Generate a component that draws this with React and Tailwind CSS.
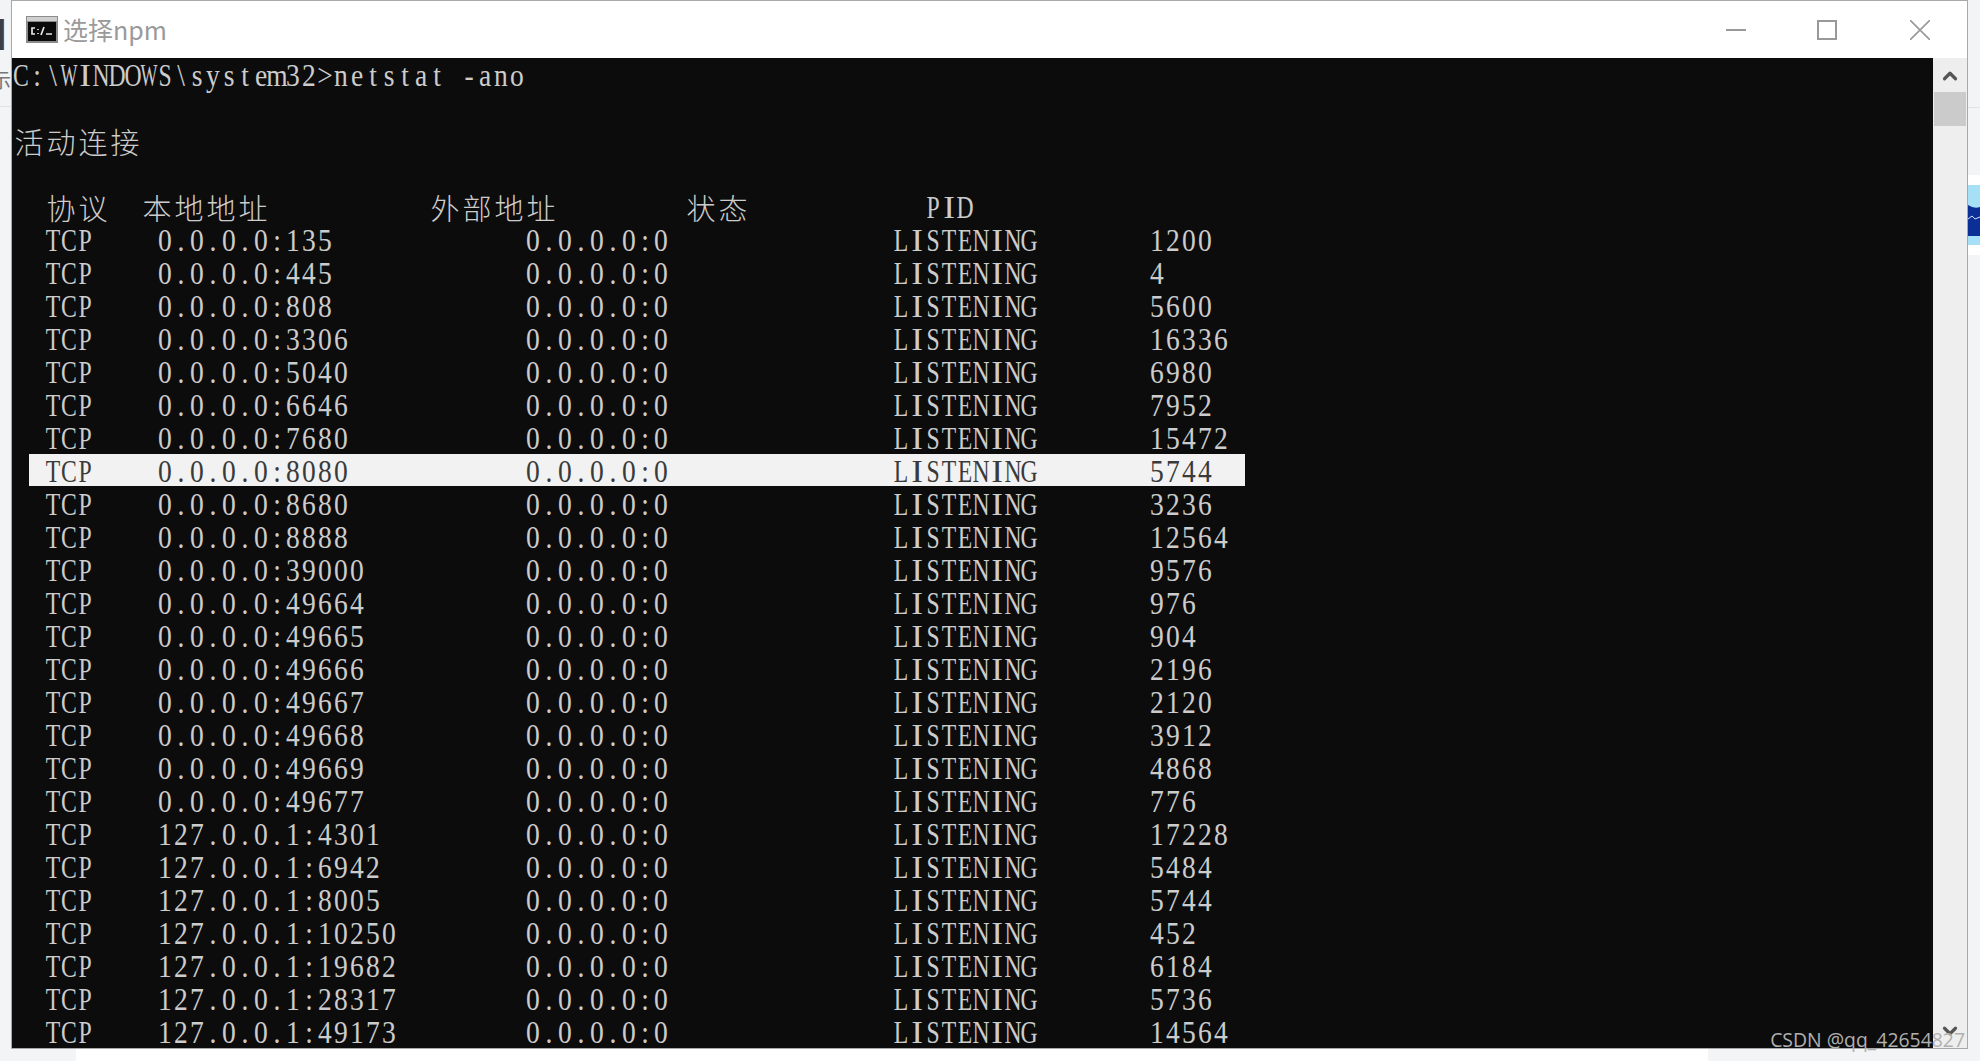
import React from 'react'
import { ChevronUp, ChevronDown } from 'lucide-react'

const listening = [
  ['0.0.0.0:135', '1200'],
  ['0.0.0.0:445', '4'],
  ['0.0.0.0:808', '5600'],
  ['0.0.0.0:3306', '16336'],
  ['0.0.0.0:5040', '6980'],
  ['0.0.0.0:6646', '7952'],
  ['0.0.0.0:7680', '15472'],
  ['0.0.0.0:8080', '5744'],
  ['0.0.0.0:8680', '3236'],
  ['0.0.0.0:8888', '12564'],
  ['0.0.0.0:39000', '9576'],
  ['0.0.0.0:49664', '976'],
  ['0.0.0.0:49665', '904'],
  ['0.0.0.0:49666', '2196'],
  ['0.0.0.0:49667', '2120'],
  ['0.0.0.0:49668', '3912'],
  ['0.0.0.0:49669', '4868'],
  ['0.0.0.0:49677', '776'],
  ['127.0.0.1:4301', '17228'],
  ['127.0.0.1:6942', '5484'],
  ['127.0.0.1:8005', '5744'],
  ['127.0.0.1:10250', '452'],
  ['127.0.0.1:19682', '6184'],
  ['127.0.0.1:28317', '5736'],
  ['127.0.0.1:49173', '14564'],
]

// same column widths netstat prints
const rowText = (addr, pid) =>
  '  TCP    ' + addr.padEnd(23) + '0.0.0.0:0'.padEnd(23) + 'LISTENING'.padEnd(16) + pid

const squeeze = (c) => {
  if (c === 'W' || c === 'M') return 'scale-x-[0.56]'
  if (c === 'I') return 'scale-x-[1.1]'
  if (c >= 'A' && c <= 'Z') return 'scale-x-[0.74]'
  return 'scale-x-[0.86]'
}

// console grid: latin chars take one 16px cell, chinese chars take two
const Char = ({ c }) => {
  if (c.charCodeAt(0) > 255) {
    return (
      <span className="flex w-8 shrink-0 justify-center font-['Noto_Sans_CJK_SC',sans-serif] text-[29px] font-light">{c}</span>
    )
  }
  return <span className={`flex w-4 shrink-0 justify-center ${squeeze(c)}`}>{c}</span>
}

const Line = ({ text = '' }) => (
  <div className="flex h-[33px] whitespace-pre leading-[34px]">
    {text.split('').map((c, i) => <Char key={i} c={c} />)}
  </div>
)

const SelectedLine = ({ text }) => (
  <div className="ml-4 mb-px flex h-[32px] w-[1216px] whitespace-pre bg-[#f2f2f2] leading-[34px] text-[#3a3a3a]">
    {text.split('').map((c, i) => <Char key={i} c={c} />)}
  </div>
)

export default function App() {
  return (
    <div className="relative h-[1061px] w-[1980px] overflow-hidden bg-white">
      <div className="flex h-[1049px]">
        {/* page behind the console window */}
        <div className="w-[11px] shrink-0 overflow-hidden bg-[#f3f4f6]">
          <div className="h-[107px] overflow-hidden border-b border-[#e2e2e2]">
            <div className="ml-[-25px] mt-[10px] h-[50px] font-['Liberation_Sans',sans-serif] text-[44px] font-bold leading-[50px] text-[#3c3f45]">H</div>
            <div className="ml-[-9px] mt-[8px] font-['Noto_Sans_CJK_SC',sans-serif] text-[20px] leading-6 text-[#777]">示</div>
          </div>
        </div>

        <div className="flex w-[1957px] shrink-0 flex-col border-x border-y border-[#a9a9a9] bg-white shadow-[3px_2px_4px_rgba(0,0,0,0.35)]">
          <div className="flex h-[57px] shrink-0 items-center">
            <svg width="32" height="27" viewBox="0 0 32 27" className="ml-[14px]">
              <rect width="32" height="27" fill="#8c8c8c" />
              <rect x="1" y="1" width="30" height="4" fill="#cfcfcf" />
              <rect x="2" y="6" width="28" height="19" fill="#0a0a0a" />
              <path d="M9 12H6v6h3M12 13v1M12 17v1M15 19l3-8M20 18h6" stroke="#e6e6e6" strokeWidth="1.7" fill="none" />
            </svg>
            <span className="ml-[5px] font-['Noto_Sans_CJK_SC','Noto_Sans',sans-serif] text-[25px] leading-none text-[#9a9a9a]">选择npm</span>
            <svg width="20" height="2" className="ml-auto mr-[71px]"><rect width="20" height="2" fill="#999" /></svg>
            <svg width="20" height="20" className="mr-[73px]"><rect x="1" y="1" width="18" height="18" fill="none" stroke="#999" strokeWidth="2" /></svg>
            <svg width="20" height="20" className="mr-[37px]"><path d="M0 0l20 20M20 0L0 20" stroke="#999" strokeWidth="1.6" /></svg>
          </div>

          <div className="flex min-h-0 flex-1">
            <div className="w-[1921px] shrink-0 overflow-hidden bg-[#0c0c0c] pl-px font-['Liberation_Serif',serif] text-[32px] text-[#cccccc]">
              <Line text={'C:\\WINDOWS\\system32>netstat -ano'} />
              <Line />
              <Line text="活动连接" />
              <Line />
              <Line text={'  协议  本地地址          外部地址        状态           PID'} />
              {listening.map(([addr, pid], i) =>
                addr === '0.0.0.0:8080'
                  ? <SelectedLine key={i} text={rowText(addr, pid).slice(1)} />
                  : <Line key={i} text={rowText(addr, pid)} />
              )}
            </div>
            <div className="flex min-w-0 flex-1 flex-col items-center bg-[#eeeeee]">
              <ChevronUp size={22} strokeWidth={3.5} className="mt-[7px] text-[#555]" />
              <div className="mt-[5px] h-[34px] w-[32px] bg-[#cbcbcb]" />
              <ChevronDown size={22} strokeWidth={3.5} className="mb-[6px] mt-auto text-[#555]" />
            </div>
          </div>
        </div>

        {/* edge of the page on the right */}
        <div className="flex min-w-0 flex-1 flex-col overflow-hidden bg-[#f3f4f6]">
          <div className="mt-[107px] h-px bg-[#e2e2e2]" />
          <div className="mt-[67px] flex h-[80px] items-center bg-white">
            <svg width="12" height="60" viewBox="0 0 12 60">
              <rect width="12" height="60" fill="#a6e0f7" />
              <path d="M0 20Q6 24 12 22V51H0z" fill="#0b2f96" />
              <path d="M0 34l4-3 3 3 5-2" stroke="#cfe0ff" strokeWidth="1" fill="none" />
            </svg>
          </div>
        </div>
      </div>

      <div className="flex h-[12px]">
        <div className="w-[76px] bg-[#f3f4f6]" />
        <div className="flex-1 bg-white" />
        <div className="w-[272px] bg-[#f3f4f6]" />
      </div>

      {/* csdn watermark */}
      <span className="absolute right-[15px] top-[1028px] font-['Open_Sans',sans-serif] text-[19.4px] leading-[24px] text-[#b0b0b0]">CSDN @qq_42654827</span>
    </div>
  )
}
